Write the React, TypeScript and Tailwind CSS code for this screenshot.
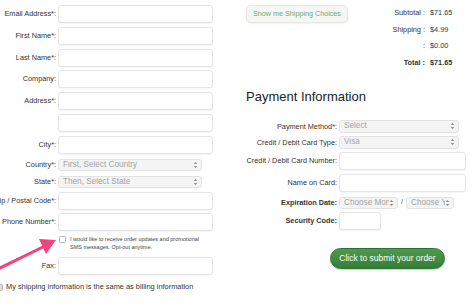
import React from "react";

const Input = ({ w }: { w: string }) => (
  <div className={`${w} h-[18px] bg-white border border-[#e4e4e4] rounded-[3px] shadow-[0_1px_1px_rgba(0,0,0,0.04)]`} />
);

const Arrows = () => (
  <svg width="5" height="8" viewBox="0 0 5 8" className="shrink-0">
    <path d="M0.8 3 L2.5 1 L4.2 3 Z" fill="#8a8a8a" />
    <path d="M0.8 5 L2.5 7 L4.2 5 Z" fill="#8a8a8a" />
  </svg>
);

const Select = ({ w, h, text }: { w: string; h: string; text: string }) => (
  <div
    className={`${w} ${h} bg-[#f4f4f4] border border-[#e2e2e2] rounded-[3px] flex items-center justify-between pl-[4px] pr-[3px] overflow-hidden`}
  >
    <span className="text-[8.2px] text-[#a3a3a3] whitespace-nowrap overflow-hidden leading-none">{text}</span>
    <Arrows />
  </div>
);

const Label = ({ children, w, bold }: { children: React.ReactNode; w: string; bold?: boolean }) => (
  <div className={`${w} shrink-0 flex justify-end`}>
    <span className={`whitespace-nowrap text-[7.3px] leading-none text-[#333] ${bold ? "font-bold" : ""}`}>{children}</span>
  </div>
);

const LRow = ({ label, mt, children }: { label: string; mt: string; children: React.ReactNode }) => (
  <div className={`flex items-center ${mt}`}>
    <Label w="w-[56px]">{label}</Label>
    <div className="ml-[2px]">{children}</div>
  </div>
);

const RRow = ({ label, mt, bold, children }: { label: string; mt: string; bold?: boolean; children: React.ReactNode }) => (
  <div className={`flex items-center ${mt}`}>
    <Label w="w-[100px]" bold={bold}>{label}</Label>
    <div className="ml-[2px] flex items-center">{children}</div>
  </div>
);

export default function App() {
  return (
    <div className="relative w-[474px] h-[305px] bg-white overflow-hidden flex font-['Liberation_Sans',Arial,sans-serif] text-[#333]">
      {/* Left column */}
      <div className="w-[237px] shrink-0 flex flex-col">
        <LRow label="Email Address*:" mt="mt-[5px]"><Input w="w-[155px]" /></LRow>
        <LRow label="First Name*:" mt="mt-[4px]"><Input w="w-[155px]" /></LRow>
        <LRow label="Last Name*:" mt="mt-[4px]"><Input w="w-[155px]" /></LRow>
        <LRow label="Company:" mt="mt-[3px]"><Input w="w-[155px]" /></LRow>
        <LRow label="Address*:" mt="mt-[4px]"><Input w="w-[155px]" /></LRow>
        <LRow label="" mt="mt-[4px]"><Input w="w-[155px]" /></LRow>
        <LRow label="City*:" mt="mt-[4px]"><Input w="w-[155px]" /></LRow>
        <LRow label="Country*:" mt="mt-[5px]"><Select w="w-[144px]" h="h-[12px]" text="First, Select Country" /></LRow>
        <LRow label="State*:" mt="mt-[5px]"><Select w="w-[144px]" h="h-[12px]" text="Then, Select State" /></LRow>
        <LRow label="Zip / Postal Code*:" mt="mt-[4px]"><Input w="w-[155px]" /></LRow>
        <LRow label="Phone Number*:" mt="mt-[3px]"><Input w="w-[155px]" /></LRow>
        <div className="flex mt-[4px] h-[18px] pl-[59px]">
          <div className="w-[7px] h-[7px] mt-[1px] border border-[#b5b5b5] rounded-[1.5px] bg-white shrink-0" />
          <div className="ml-[4px] text-[5.5px] leading-[8px] text-[#444] whitespace-nowrap">
            <div className="-mt-[0.5px]">I would like to receive order updates and promotional</div>
            <div>SMS messages. Opt-out anytime.</div>
          </div>
        </div>
        <LRow label="Fax:" mt="mt-[4px]"><Input w="w-[155px]" /></LRow>
        <div className="flex items-center mt-[6px] h-[12px] -ml-[4px]">
          <div className="w-[7px] h-[7px] border border-[#b5b5b5] rounded-[1.5px] bg-[#ddd] shrink-0" />
          <span className="ml-[3px] text-[7.4px] text-[#333] whitespace-nowrap">My shipping information is the same as billing information</span>
        </div>
      </div>

      {/* Right column */}
      <div className="flex-1 flex flex-col">
        <div className="flex pt-[5px]">
          <div className="ml-[9px] w-[102px] h-[18px] rounded-[5px] bg-[#f6f6f4] border border-[#e6e6e2] shadow-[0_1px_2px_rgba(0,0,0,0.06)] flex items-center justify-center">
            <span className="text-[7.2px] text-[#74a86e] whitespace-nowrap">Show me Shipping Choices</span>
          </div>
          <div className="ml-[17px] flex flex-col text-[7.3px] text-[#333]">
            {[
              ["Subtotal :", "$71.65", false],
              ["Shipping :", "$4.99", false],
              [":", "$0.00", false],
              ["Total :", "$71.65", true],
            ].map(([l, v, b], i) => (
              <div key={i} className={`flex items-center h-[16.7px] ${b ? "font-bold" : ""}`}>
                <span className="w-[60px] text-right whitespace-nowrap">{l as string}</span>
                <span className="ml-[5px] whitespace-nowrap">{v as string}</span>
              </div>
            ))}
          </div>
        </div>

        <div className="ml-[9px] mt-[17px] text-[13px] leading-[16px] text-[#222]">Payment Information</div>

        <RRow label="Payment Method*:" mt="mt-[15px]"><Select w="w-[120px]" h="h-[13px]" text="Select" /></RRow>
        <RRow label="Credit / Debit Card Type:" mt="mt-[3px]"><Select w="w-[120px]" h="h-[13px]" text="Visa" /></RRow>
        <RRow label="Credit / Debit Card Number:" mt="mt-[3px]"><Input w="w-[127px]" /></RRow>
        <RRow label="Name on Card:" mt="mt-[4px]"><Input w="w-[127px]" /></RRow>
        <RRow label="Expiration Date:" mt="mt-[5px]" bold>
          <Select w="w-[59px]" h="h-[12px]" text="Choose Month" />
          <span className="mx-[3px] text-[7.3px] text-[#555]">/</span>
          <Select w="w-[48px]" h="h-[12px]" text="Choose Year" />
        </RRow>
        <RRow label="Security Code:" mt="mt-[3px]" bold><Input w="w-[42px]" /></RRow>

        <div className="ml-[93px] mt-[18px] w-[115px] h-[21px] rounded-full bg-gradient-to-b from-[#4f9a4f] to-[#347d37] border border-[#2f6f31] shadow-[0_1px_2px_rgba(0,0,0,0.2)] flex items-center justify-center">
          <span className="text-[8.5px] text-white whitespace-nowrap">Click to submit your order</span>
        </div>
      </div>

      {/* Pink arrow annotation */}
      <svg className="absolute left-0 top-0 pointer-events-none" width="474" height="305" viewBox="0 0 474 305">
        <line x1="-2" y1="269" x2="45" y2="246" stroke="#f0457c" strokeWidth="3" strokeLinecap="round" />
        <polygon points="56,240 39,239 46,254" fill="#f0457c" />
      </svg>
    </div>
  );
}
